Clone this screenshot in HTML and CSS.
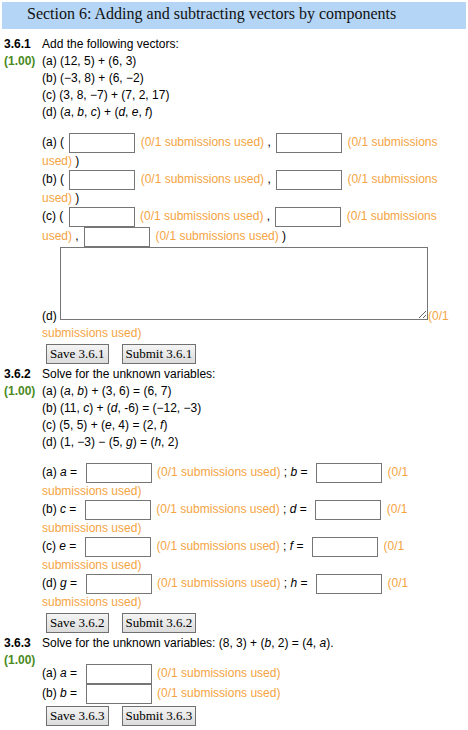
FILE: index.html
```html
<!DOCTYPE html>
<html lang="en">
<head>
    <meta charset="UTF-8">
    <meta name="viewport" content="width=device-width, initial-scale=1.0">
    <title>Section 6: Adding and subtracting vectors by components</title>
    <link rel="stylesheet" href="styles.css">
</head>
<body>
    <div class="section-head">Section 6: Adding and subtracting vectors by components</div>

    <!-- 3.6.1 -->
    <div class="question">
        <div class="qnum">
            <span class="qid">3.6.1</span>
            <span class="points">(1.00)</span>
        </div>
        <div class="qbody">
            <div class="qtext">
                Add the following vectors:<br>
                (a) (12, 5) + (6, 3)<br>
                (b) (−3, 8) + (6, −2)<br>
                (c) (3, 8, −7) + (7, 2, 17)<br>
                (d) (<i>a</i>, <i>b</i>, <i>c</i>) + (<i>d</i>, <i>e</i>, <i>f</i>)
            </div>
            <div class="answers">
                <div class="ans">(a) ( <input type="text" class="blank"> <span class="subs">(0/1 submissions used)</span> , <input type="text" class="blank"> <span class="subs">(0/1 submissions used)</span> )</div>
                <div class="ans">(b) ( <input type="text" class="blank"> <span class="subs">(0/1 submissions used)</span> , <input type="text" class="blank"> <span class="subs">(0/1 submissions used)</span> )</div>
                <div class="ans">(c) ( <input type="text" class="blank"> <span class="subs">(0/1 submissions used)</span> , <input type="text" class="blank"> <span class="subs">(0/1 submissions used)</span> , <input type="text" class="blank"> <span class="subs">(0/1 submissions used)</span> )</div>
                <div class="ans">(d) <textarea class="essay"></textarea><span class="subs">(0/1 submissions used)</span></div>
            </div>
            <div class="buttons">
                <button class="btn">Save 3.6.1</button>
                <button class="btn">Submit 3.6.1</button>
            </div>
        </div>
    </div>

    <!-- 3.6.2 -->
    <div class="question">
        <div class="qnum">
            <span class="qid">3.6.2</span>
            <span class="points">(1.00)</span>
        </div>
        <div class="qbody">
            <div class="qtext">
                Solve for the unknown variables:<br>
                (a) (<i>a</i>, <i>b</i>) + (3, 6) = (6, 7)<br>
                (b) (11, <i>c</i>) + (<i>d</i>, -6) = (−12, −3)<br>
                (c) (5, 5) + (<i>e</i>, 4) = (2, <i>f</i>)<br>
                (d) (1, −3) − (5, <i>g</i>) = (<i>h</i>, 2)
            </div>
            <div class="answers">
                <div class="ans">(a) <i>a</i> =&nbsp; <input type="text" class="blank"> <span class="subs">(0/1 submissions used)</span> ; <i>b</i> =&nbsp; <input type="text" class="blank"> <span class="subs">(0/1 submissions used)</span></div>
                <div class="ans">(b) <i>c</i> =&nbsp; <input type="text" class="blank"> <span class="subs">(0/1 submissions used)</span> ; <i>d</i> =&nbsp; <input type="text" class="blank"> <span class="subs">(0/1 submissions used)</span></div>
                <div class="ans">(c) <i>e</i> =&nbsp; <input type="text" class="blank"> <span class="subs">(0/1 submissions used)</span> ; <i>f</i> =&nbsp; <input type="text" class="blank"> <span class="subs">(0/1 submissions used)</span></div>
                <div class="ans">(d) <i>g</i> =&nbsp; <input type="text" class="blank"> <span class="subs">(0/1 submissions used)</span> ; <i>h</i> =&nbsp; <input type="text" class="blank"> <span class="subs">(0/1 submissions used)</span></div>
            </div>
            <div class="buttons">
                <button class="btn">Save 3.6.2</button>
                <button class="btn">Submit 3.6.2</button>
            </div>
        </div>
    </div>

    <!-- 3.6.3 -->
    <div class="question">
        <div class="qnum">
            <span class="qid">3.6.3</span>
            <span class="points">(1.00)</span>
        </div>
        <div class="qbody">
            <div class="qtext">
                Solve for the unknown variables: (8, 3) + (<i>b</i>, 2) = (4, <i>a</i>).
            </div>
            <div class="answers">
                <div class="ans">(a) <i>a</i> =&nbsp; <input type="text" class="blank"> <span class="subs">(0/1 submissions used)</span></div>
                <div class="ans">(b) <i>b</i> =&nbsp; <input type="text" class="blank"> <span class="subs">(0/1 submissions used)</span></div>
            </div>
            <div class="buttons">
                <button class="btn">Save 3.6.3</button>
                <button class="btn">Submit 3.6.3</button>
            </div>
        </div>
    </div>
</body>
</html>
```

FILE: styles.css
```css
body {
    margin: 2px;
    font-family: 'Liberation Sans', Arial, sans-serif;
    font-size: 12px;
    line-height: 17px;
    color: #000;
    background: #fff;
}

.section-head {
    background: #b4d5f5;
    font-family: 'Liberation Serif', 'Times New Roman', serif;
    font-size: 16px;
    line-height: 18px;
    padding: 3px 0 6px 25px;
    margin-bottom: 5px;
    color: #111;
}

.question {
    display: flex;
    padding-top: 2px;
}

.qnum {
    width: 40px;
    flex-shrink: 0;
    padding-left: 2px;
    box-sizing: border-box;
    font-weight: bold;
}

.qid,
.points {
    display: block;
}

.points {
    color: #4a8a1e;
}

.qbody {
    flex: 1;
    min-width: 0;
    padding-right: 2px;
}

.answers {
    margin-top: 12px;
}

.subs {
    color: #f5a442;
}

.blank {
    width: 66px;
    height: 20px;
    box-sizing: border-box;
    margin: 0 2px;
    padding: 0 2px;
    border: 1px solid #767676;
    background: #fff;
    vertical-align: middle;
    font: inherit;
}

.essay {
    width: 368px;
    height: 73px;
    box-sizing: border-box;
    margin: 0;
    padding: 2px;
    border: 1px solid #767676;
    background: #fff;
    font: inherit;
}

.buttons {
    display: flex;
    gap: 13px;
    padding: 2px 0 0 4px;
}

.btn {
    height: 20px;
    padding: 0 3px;
    margin: 0;
    font-family: 'Liberation Serif', 'Times New Roman', serif;
    font-size: 13px;
    font-weight: normal;
    color: #000;
    border: 1px solid #707070;
    border-radius: 0;
    background: linear-gradient(#f4f4f4, #dcdcdc);
    cursor: pointer;
}
```
